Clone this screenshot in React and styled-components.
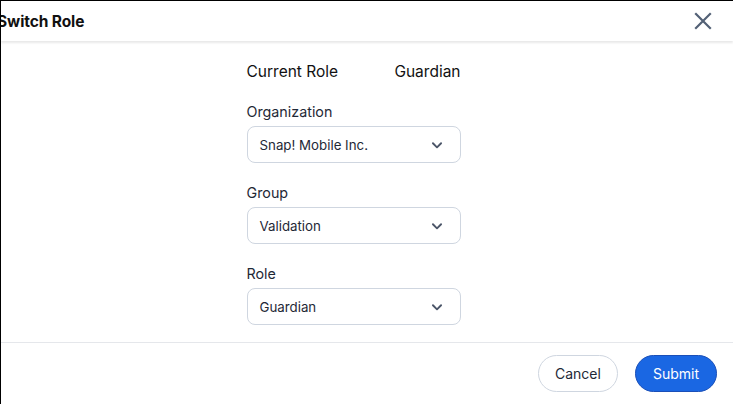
import styled, { createGlobalStyle } from "styled-components";

const GlobalStyle = createGlobalStyle`
  html, body {
    margin: 0;
    padding: 0;
    background: #fff;
  }
  body {
    font-family: Inter, "Liberation Sans", sans-serif;
    -webkit-font-smoothing: antialiased;
  }
`;

const fields = [
  { label: "Organization", value: "Snap! Mobile Inc." },
  { label: "Group", value: "Validation" },
  { label: "Role", value: "Guardian" },
];

const Chevron = () => (
  <svg width="14" height="14" viewBox="0 0 24 24" fill="none">
    <path
      d="M5 9l7 7 7-7"
      stroke="#4b5568"
      strokeWidth="3.2"
      strokeLinecap="round"
      strokeLinejoin="round"
    />
  </svg>
);

const CloseIcon = () => (
  <svg width="18" height="18" viewBox="0 0 18 18" fill="none">
    <path
      d="M2 2l14 14M16 2L2 16"
      stroke="#536176"
      strokeWidth="2.2"
      strokeLinecap="square"
    />
  </svg>
);

const App = () => {
  return (
    <>
      <GlobalStyle />
      <Modal>
        <Header>
          <Title>Switch Role</Title>
          <CloseButton aria-label="Close">
            <CloseIcon />
          </CloseButton>
        </Header>
        <Body>
          <Form>
            <CurrentRow>
              <span>Current Role</span>
              <span>Guardian</span>
            </CurrentRow>
            {fields.map((f) => (
              <Field key={f.label}>
                <Label>{f.label}</Label>
                <Select>
                  <span>{f.value}</span>
                  <Chevron />
                </Select>
              </Field>
            ))}
          </Form>
        </Body>
        <Footer>
          <Button>Cancel</Button>
          <Button $primary>Submit</Button>
        </Footer>
      </Modal>
    </>
  );
};

const Modal = styled.div`
  width: 733px;
  height: 404px;
  box-sizing: border-box;
  border-left: 1px solid #000;
  border-top: 1px solid #000;
  display: flex;
  flex-direction: column;
  overflow: hidden;
  background: #fff;
`;

const Header = styled.div`
  height: 40px;
  flex-shrink: 0;
  display: flex;
  align-items: center;
  justify-content: space-between;
  padding: 0 21px 0 0;
  box-shadow: 0 2px 2px rgba(0, 0, 0, 0.09);
  position: relative;
  z-index: 1;
`;

const Title = styled.h2`
  margin: 0 0 0 -4px;
  font-size: 15.5px;
  font-weight: 700;
  color: #111;
  letter-spacing: -0.1px;
`;

const CloseButton = styled.button`
  border: none;
  background: none;
  padding: 0;
  display: flex;
  cursor: pointer;
`;

const Body = styled.div`
  flex: 1;
  min-height: 0;
  display: flex;
  justify-content: center;
  border-bottom: 1px solid #e5e7eb;
  padding-right: 27px;
`;

const Form = styled.div`
  width: 214px;
  padding-top: 21px;
  display: flex;
  flex-direction: column;
`;

const CurrentRow = styled.div`
  display: flex;
  justify-content: space-between;
  font-size: 15.5px;
  color: #111;
  line-height: 20px;
  margin-bottom: 21px;
`;

const Field = styled.div`
  display: flex;
  flex-direction: column;
  margin-bottom: 21px;
`;

const Label = styled.label`
  font-size: 14.3px;
  color: #1f2937;
  line-height: 18px;
  margin-bottom: 5px;
`;

const Select = styled.div`
  height: 37px;
  box-sizing: border-box;
  border: 1px solid #cfd6e0;
  border-radius: 8px;
  display: flex;
  align-items: center;
  justify-content: space-between;
  padding: 0 16px 0 12px;
  font-size: 13.3px;
  color: #1f2937;
`;

const Footer = styled.div`
  height: 61px;
  flex-shrink: 0;
  display: flex;
  align-items: center;
  justify-content: flex-end;
  gap: 17px;
  padding: 0 16px 0 0;
`;

const Button = styled.button`
  height: 37px;
  border-radius: 999px;
  font-family: Inter, "Liberation Sans", sans-serif;
  font-size: 14px;
  padding: 0 ${(p) => (p.$primary ? "17px" : "16px")};
  border: 1px solid ${(p) => (p.$primary ? "#1a4fb8" : "#cfd6e0")};
  background: ${(p) => (p.$primary ? "#1a67e3" : "#fff")};
  color: ${(p) => (p.$primary ? "#fff" : "#1f2937")};
  cursor: pointer;
`;

export default App;
